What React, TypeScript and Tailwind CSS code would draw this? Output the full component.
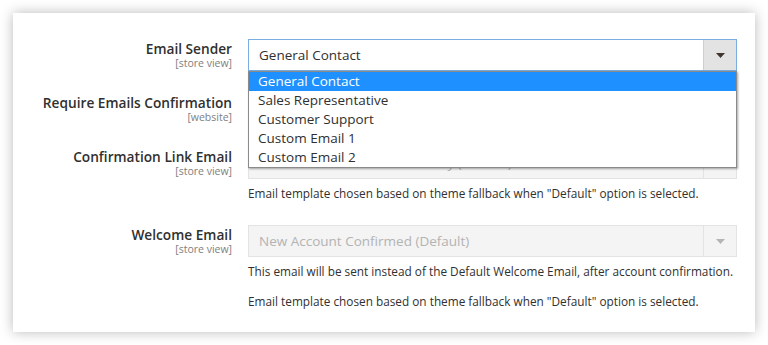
import React from "react";

const options = [
  "General Contact",
  "Sales Representative",
  "Customer Support",
  "Custom Email 1",
  "Custom Email 2",
];

function Arrow({ disabled }: { disabled?: boolean }) {
  return (
    <svg width="9" height="5" viewBox="0 0 9 5" className="block">
      <path d="M0 0 L9 0 L4.5 5 Z" fill={disabled ? "#b5b5b5" : "#41362f"} />
    </svg>
  );
}

function Label({ title, scope }: { title: string; scope: string }) {
  return (
    <div className="w-[219px] shrink-0 pt-[1px] text-right">
      <div className="text-[13.7px] font-semibold text-[#303030] leading-[17px]">
        {title}
      </div>
      <div className="text-[10.5px] text-[#808080] leading-[13px]">{scope}</div>
    </div>
  );
}

function DisabledSelect({ value }: { value?: string }) {
  return (
    <div className="flex h-[32px] w-full border border-[#e3e3e3] bg-[#f4f4f4]">
      <div className="flex flex-1 items-center pl-[10px] text-[13.5px] text-[#b3b3b3]">
        {value}
      </div>
      <div className="flex w-[33px] items-center justify-center border-l border-[#e3e3e3]">
        <Arrow disabled />
      </div>
    </div>
  );
}

function Note({ children }: { children: React.ReactNode }) {
  return (
    <p className="mt-[5px] text-[11.8px] leading-[18px] text-[#303030]">
      {children}
    </p>
  );
}

export default function App() {
  return (
    <div
      className="h-[345px] w-[768px] overflow-hidden bg-white pl-[13px] pt-[13px]"
      style={{ fontFamily: '"Open Sans", "Liberation Sans", sans-serif' }}
    >
      <div className="h-[319px] w-[742px] bg-white pt-[26px] shadow-[0_0_12px_rgba(0,0,0,0.28)]">
        {/* Email Sender */}
        <div className="flex gap-[16px]">
          <Label title="Email Sender" scope="[store view]" />
          <div className="relative w-[489px]">
            <div className="flex h-[32px] border border-[#7aaee0] bg-white">
              <div className="flex flex-1 items-center pl-[10px] pt-[1px] text-[13.5px] text-[#303030]">
                General Contact
              </div>
              <div className="flex w-[33px] items-center justify-center border-l border-[#cfcfcf] bg-[#e3e3e3]">
                <Arrow />
              </div>
            </div>
            <ul className="absolute left-0 right-0 top-[32px] z-10 border border-[#8a8a8a] bg-white shadow-[1px_1px_2px_rgba(0,0,0,0.35)]">
              {options.map((o, i) => (
                <li
                  key={o}
                  className={`h-[19px] pl-[9px] text-[13.5px] leading-[19px] ${
                    i === 0 ? "bg-[#1e90ff] text-white" : "text-[#303030]"
                  }`}
                >
                  {o}
                </li>
              ))}
            </ul>
          </div>
        </div>

        {/* Require Emails Confirmation (select hidden under the open list) */}
        <div className="mt-[22px] flex gap-[16px]">
          <Label title="Require Emails Confirmation" scope="[website]" />
          <div className="w-[489px]">
            <DisabledSelect />
          </div>
        </div>

        {/* Confirmation Link Email */}
        <div className="mt-[22px] flex gap-[16px]">
          <Label title="Confirmation Link Email" scope="[store view]" />
          <div className="w-[489px]">
            <DisabledSelect value="New Account Confirmation Key (Default)" />
            <Note>
              Email template chosen based on theme fallback when "Default"
              option is selected.
            </Note>
          </div>
        </div>

        {/* Welcome Email */}
        <div className="mt-[23px] flex gap-[16px]">
          <Label title="Welcome Email" scope="[store view]" />
          <div className="w-[489px]">
            <DisabledSelect value="New Account Confirmed (Default)" />
            <Note>
              This email will be sent instead of the Default Welcome Email,
              after account confirmation.
            </Note>
            <p className="mt-[12px] text-[11.8px] leading-[18px] text-[#303030]">
              Email template chosen based on theme fallback when "Default"
              option is selected.
            </p>
          </div>
        </div>
      </div>
    </div>
  );
}
